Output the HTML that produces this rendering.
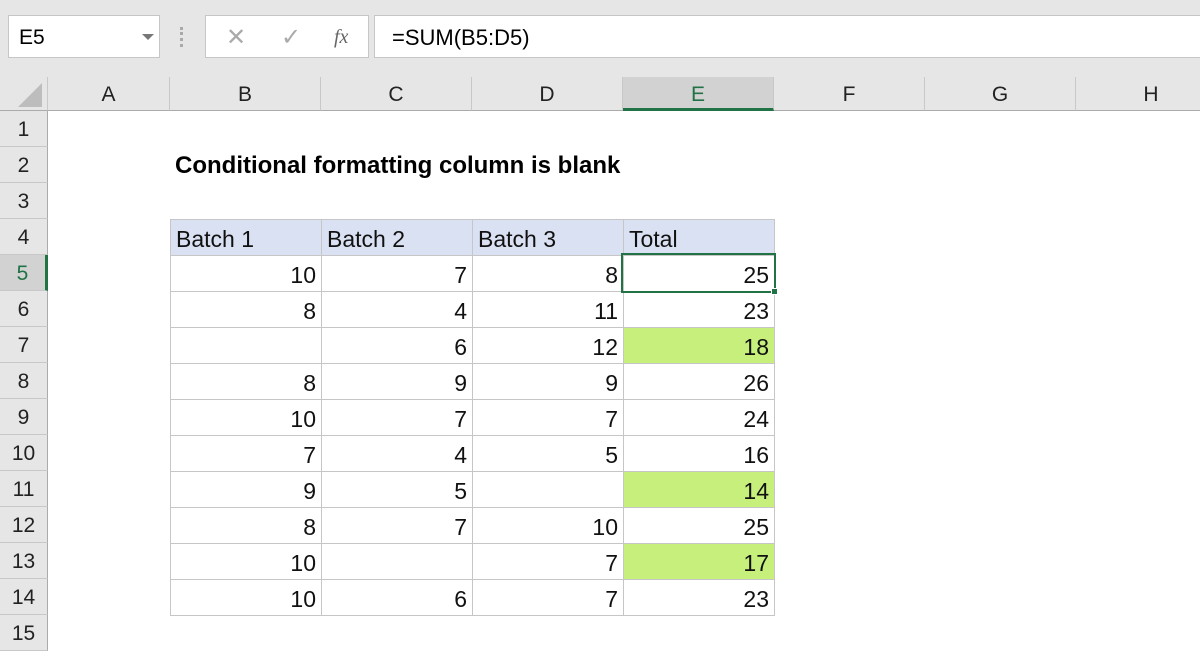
<!DOCTYPE html><html><head><style>
body{margin:0;width:1200px;height:630px;overflow:hidden;background:#fff;font-family:"Liberation Sans",sans-serif;position:relative}
div{position:absolute;box-sizing:border-box}
.top{left:0;top:0;width:1200px;height:77px;background:#e6e6e6}
.box{background:#fff;border:1px solid #c6c6c6;height:43px;top:15px}
.ch{top:77px;height:34px;background:#e6e6e6;border-right:1px solid #c8c8c8;border-bottom:1px solid #ababab;font-size:21px;text-align:center;line-height:36px;color:#222}
.rh{left:0;width:48px;height:36px;background:#e6e6e6;border-bottom:1px solid #c8c8c8;border-right:1px solid #ababab;font-size:21px;text-align:center;line-height:38px;color:#222}
.c{height:37px;border:1px solid #c6c6c6;font-size:23px;line-height:38px;padding:0 5px;text-align:right;color:#111}
.h{background:#d9e1f2;text-align:left}
.g{background:#c6ef7b}
</style></head><body>
<div class="top"></div>
<div class="box" style="left:8px;width:152px;font-size:21px;line-height:43px;padding-left:10px">E5<span style="position:absolute;left:133px;top:18px;width:0;height:0;border-left:6px solid transparent;border-right:6px solid transparent;border-top:6px solid #777"></span></div>
<div style="left:180px;top:27px;width:3px;height:20px;border-left:3px dotted #aaa"></div>
<div class="box" style="left:205px;width:164px;font-size:24px;line-height:43px;color:#aaa"><span style="position:absolute;left:20px">✕</span><span style="position:absolute;left:75px">✓</span><span style="position:absolute;left:128px;font-family:'Liberation Serif',serif;font-style:italic;color:#666;font-size:20px">fx</span></div>
<div class="box" style="left:374px;width:830px;font-size:22px;line-height:43px;padding-left:17px">=SUM(B5:D5)</div>
<div class="ch" style="left:0;width:48px"><span style="position:absolute;left:18px;top:6px;width:0;height:0;border-left:24px solid transparent;border-bottom:24px solid #bdbdbd"></span></div>
<div class="ch" style="left:48px;width:122px">A</div>
<div class="ch" style="left:170px;width:151px">B</div>
<div class="ch" style="left:321px;width:151px">C</div>
<div class="ch" style="left:472px;width:151px">D</div>
<div class="ch" style="left:623px;width:151px;background:#d2d2d2;color:#217346;border-bottom:3px solid #217346">E</div>
<div class="ch" style="left:774px;width:151px">F</div>
<div class="ch" style="left:925px;width:151px">G</div>
<div class="ch" style="left:1076px;width:151px">H</div>
<div class="rh" style="top:111px">1</div><div class="rh" style="top:147px">2</div><div class="rh" style="top:183px">3</div><div class="rh" style="top:219px">4</div>
<div class="rh" style="top:255px;background:#d2d2d2;color:#217346;border-right:3px solid #217346">5</div>
<div class="rh" style="top:291px">6</div><div class="rh" style="top:327px">7</div><div class="rh" style="top:363px">8</div><div class="rh" style="top:399px">9</div><div class="rh" style="top:435px">10</div><div class="rh" style="top:471px">11</div><div class="rh" style="top:507px">12</div><div class="rh" style="top:543px">13</div><div class="rh" style="top:579px">14</div><div class="rh" style="top:615px">15</div>
<div style="left:175px;top:149px;font-size:24px;font-weight:bold;line-height:34px;white-space:nowrap">Conditional formatting column is blank</div>
<div class="c h" style="left:170px;top:219px;width:152px">Batch 1</div>
<div class="c h" style="left:321px;top:219px;width:152px">Batch 2</div>
<div class="c h" style="left:472px;top:219px;width:152px">Batch 3</div>
<div class="c h" style="left:623px;top:219px;width:152px">Total</div>
<div class="c" style="left:170px;top:255px;width:152px">10</div><div class="c" style="left:321px;top:255px;width:152px">7</div><div class="c" style="left:472px;top:255px;width:152px">8</div><div class="c" style="left:623px;top:255px;width:152px">25</div>
<div class="c" style="left:170px;top:291px;width:152px">8</div><div class="c" style="left:321px;top:291px;width:152px">4</div><div class="c" style="left:472px;top:291px;width:152px">11</div><div class="c" style="left:623px;top:291px;width:152px">23</div>
<div class="c" style="left:170px;top:327px;width:152px"></div><div class="c" style="left:321px;top:327px;width:152px">6</div><div class="c" style="left:472px;top:327px;width:152px">12</div><div class="c g" style="left:623px;top:327px;width:152px">18</div>
<div class="c" style="left:170px;top:363px;width:152px">8</div><div class="c" style="left:321px;top:363px;width:152px">9</div><div class="c" style="left:472px;top:363px;width:152px">9</div><div class="c" style="left:623px;top:363px;width:152px">26</div>
<div class="c" style="left:170px;top:399px;width:152px">10</div><div class="c" style="left:321px;top:399px;width:152px">7</div><div class="c" style="left:472px;top:399px;width:152px">7</div><div class="c" style="left:623px;top:399px;width:152px">24</div>
<div class="c" style="left:170px;top:435px;width:152px">7</div><div class="c" style="left:321px;top:435px;width:152px">4</div><div class="c" style="left:472px;top:435px;width:152px">5</div><div class="c" style="left:623px;top:435px;width:152px">16</div>
<div class="c" style="left:170px;top:471px;width:152px">9</div><div class="c" style="left:321px;top:471px;width:152px">5</div><div class="c" style="left:472px;top:471px;width:152px"></div><div class="c g" style="left:623px;top:471px;width:152px">14</div>
<div class="c" style="left:170px;top:507px;width:152px">8</div><div class="c" style="left:321px;top:507px;width:152px">7</div><div class="c" style="left:472px;top:507px;width:152px">10</div><div class="c" style="left:623px;top:507px;width:152px">25</div>
<div class="c" style="left:170px;top:543px;width:152px">10</div><div class="c" style="left:321px;top:543px;width:152px"></div><div class="c" style="left:472px;top:543px;width:152px">7</div><div class="c g" style="left:623px;top:543px;width:152px">17</div>
<div class="c" style="left:170px;top:579px;width:152px">10</div><div class="c" style="left:321px;top:579px;width:152px">6</div><div class="c" style="left:472px;top:579px;width:152px">7</div><div class="c" style="left:623px;top:579px;width:152px">23</div>
<div style="left:621px;top:253px;width:155px;height:40px;border:2px solid #217346"></div>
<div style="left:771px;top:288px;width:7px;height:7px;background:#217346;border:1px solid #fff"></div>
</body></html>
